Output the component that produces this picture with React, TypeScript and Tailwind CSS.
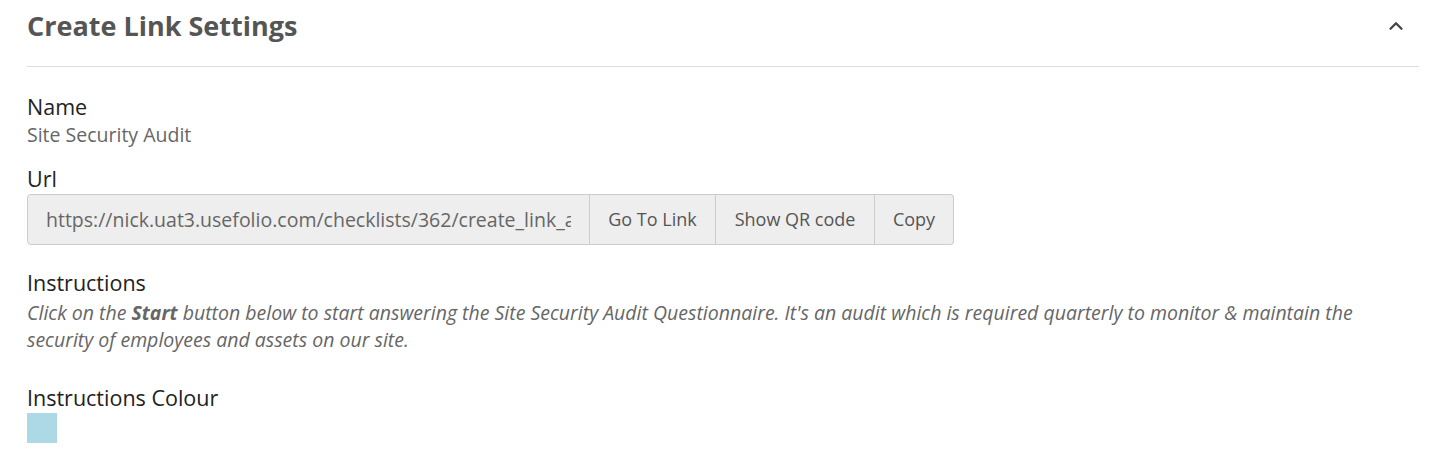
import { ChevronUp } from "lucide-react";

const buttons = [
  { label: "Go To Link", w: "w-[126px]" },
  { label: "Show QR code", w: "w-[159px]" },
  { label: "Copy", w: "w-[79px]" },
];

export default function App() {
  return (
    <div className="bg-white min-h-[468px] pl-[27px] pr-[16px] font-['Open_Sans',sans-serif]">
      {/* Header */}
      <div className="flex items-center justify-between pt-[8px] pb-[22px] border-b border-[#dddddd]">
        <h2 className="text-[27px] leading-[36px] font-bold text-[#555555]">Create Link Settings</h2>
        <ChevronUp className="w-[22px] h-[22px] mr-[12px] text-[#444444]" strokeWidth={2.5} />
      </div>

      {/* Name */}
      <div className="mt-[26px]">
        <div className="text-[21.5px] leading-[28px] font-medium text-[#222222]">Name</div>
        <div className="text-[19.5px] leading-[28px] text-[#666666]">Site Security Audit</div>
      </div>

      {/* Url */}
      <div className="mt-[16px]">
        <div className="text-[21.5px] leading-[28px] font-medium text-[#222222]">Url</div>
        <div className="flex h-[51px] mt-[1px] text-[#555555]">
          <input
            readOnly
            value="https://nick.uat3.usefolio.com/checklists/362/create_link_answer"
            className="w-[563px] h-full px-[18px] text-[19.5px] bg-[#eeeeee] border border-[#cccccc] rounded-l-[4px] text-[#666666] outline-none"
          />
          {buttons.map((b, i) => (
            <button
              key={b.label}
              className={
                b.w +
                " h-full text-[18px] text-center bg-[#eeeeee] border border-l-0 border-[#cccccc] whitespace-nowrap" +
                (i === buttons.length - 1 ? " rounded-r-[4px]" : "")
              }
            >
              {b.label}
            </button>
          ))}
        </div>
      </div>

      {/* Instructions */}
      <div className="mt-[24px]">
        <div className="text-[21.5px] leading-[28px] font-medium text-[#222222]">Instructions</div>
        <p className="mt-[2px] text-[19.5px] leading-[27px] italic text-[#666666]">
          Click on the <b className="font-bold">Start</b> button below to start answering the Site Security Audit
          Questionnaire. It's an audit which is required quarterly to monitor &amp; maintain the security of
          employees and assets on our site.
        </p>
      </div>

      {/* Instructions Colour */}
      <div className="mt-[31px]">
        <div className="text-[21.5px] leading-[28px] font-medium text-[#222222]">Instructions Colour</div>
        <div className="mt-[1px] w-[30px] h-[30px] bg-[#add8e6]" />
      </div>
    </div>
  );
}
